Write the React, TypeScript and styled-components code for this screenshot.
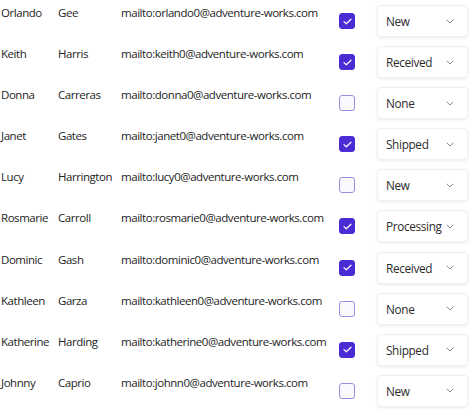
import React, { useState } from "react";
import styled, { createGlobalStyle } from "styled-components";

const GlobalStyle = createGlobalStyle`
  html, body {
    margin: 0;
    padding: 0;
    background: #ffffff;
  }
  body {
    font-family: "Open Sans", "Noto Sans", sans-serif;
    font-size: 11.5px;
    letter-spacing: -0.45px;
    color: #242424;
  }
`;

const List = styled.div`
  display: flex;
  flex-direction: column;
  width: 474px;
`;

const Row = styled.div`
  display: grid;
  grid-template-columns: 57px 63px 219px 38px 91px;
  height: 41.1px;
  align-items: start;
`;

const Cell = styled.div`
  padding: 4px 0 0 1px;
  line-height: 18px;
  white-space: nowrap;
`;

const CheckCell = styled.div`
  padding-top: 13px;
`;

const Box = styled.span<{ $checked: boolean }>`
  display: flex;
  align-items: center;
  justify-content: center;
  width: 16px;
  height: 16px;
  box-sizing: border-box;
  border-radius: 3px;
  background: ${(p) => (p.$checked ? "#4b2bd4" : "#f9f8fc")};
  border: 1.5px solid ${(p) => (p.$checked ? "#4b2bd4" : "#9d8de2")};
  cursor: pointer;
`;

const SelectCell = styled.div`
  padding-top: 5px;
`;

const SelectBox = styled.div`
  display: flex;
  align-items: center;
  justify-content: space-between;
  height: 32px;
  box-sizing: border-box;
  padding: 0 13px 0 8px;
  background: #ffffff;
  border-radius: 4px;
  border: 1px solid #f0f0f0;
  box-shadow: 0 1px 3px rgba(0, 0, 0, 0.08);
  color: #2c2c2c;
  font-size: 11.8px;
  letter-spacing: -0.35px;
`;

type Person = {
  first: string;
  last: string;
  mail: string;
  done: boolean;
  status: string;
};

const people: Person[] = [
  { first: "Orlando", last: "Gee", mail: "orlando0", done: true, status: "New" },
  { first: "Keith", last: "Harris", mail: "keith0", done: true, status: "Received" },
  { first: "Donna", last: "Carreras", mail: "donna0", done: false, status: "None" },
  { first: "Janet", last: "Gates", mail: "janet0", done: true, status: "Shipped" },
  { first: "Lucy", last: "Harrington", mail: "lucy0", done: false, status: "New" },
  { first: "Rosmarie", last: "Carroll", mail: "rosmarie0", done: true, status: "Processing" },
  { first: "Dominic", last: "Gash", mail: "dominic0", done: true, status: "Received" },
  { first: "Kathleen", last: "Garza", mail: "kathleen0", done: false, status: "None" },
  { first: "Katherine", last: "Harding", mail: "katherine0", done: true, status: "Shipped" },
  { first: "Johnny", last: "Caprio", mail: "johnn0", done: false, status: "New" },
];

const Check = () => (
  <svg width="9" height="7" viewBox="0 0 9 7">
    <path d="M1 3.6 L3.3 5.8 L8 1.2" fill="none" stroke="#fff" strokeWidth="1.2" strokeLinecap="round" strokeLinejoin="round" />
  </svg>
);

const Chevron = () => (
  <svg width="8" height="5" viewBox="0 0 8 5">
    <path d="M1 1 L4 4 L7 1" fill="none" stroke="#8a8a8a" strokeWidth="1" strokeLinecap="round" strokeLinejoin="round" />
  </svg>
);

export default function App() {
  const [rows, setRows] = useState(people);
  const toggle = (i: number) =>
    setRows((r) => r.map((p, j) => (j === i ? { ...p, done: !p.done } : p)));

  return (
    <>
      <GlobalStyle />
      <List>
        {rows.map((p, i) => (
          <Row key={p.mail}>
            <Cell>{p.first}</Cell>
            <Cell>{p.last}</Cell>
            <Cell>mailto:{p.mail}@adventure-works.com</Cell>
            <CheckCell>
              <Box $checked={p.done} onClick={() => toggle(i)}>
                {p.done && <Check />}
              </Box>
            </CheckCell>
            <SelectCell>
              <SelectBox>
                <span>{p.status}</span>
                <Chevron />
              </SelectBox>
            </SelectCell>
          </Row>
        ))}
      </List>
    </>
  );
}
